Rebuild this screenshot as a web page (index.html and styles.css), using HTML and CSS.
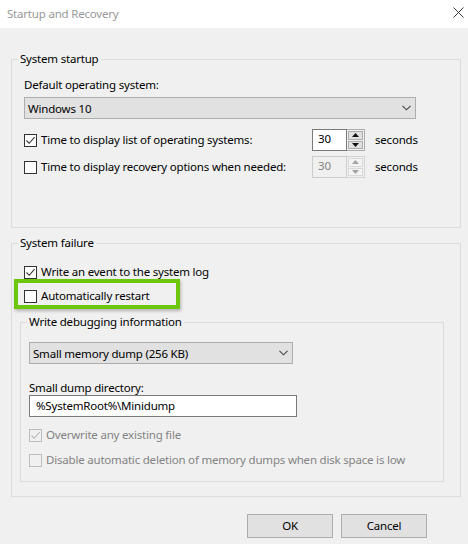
FILE: index.html
```html
<!DOCTYPE html>
<html lang="en">
<head>
<meta charset="utf-8">
<title>Startup and Recovery</title>
<link rel="stylesheet" href="styles.css">
</head>
<body>
<div class="window">
  <div class="titlebar">
    <span class="title">Startup and Recovery</span>
    <svg class="close" width="11" height="11" viewBox="0 0 11 11"><path d="M0.5 0.5 L10.5 10.5 M10.5 0.5 L0.5 10.5" stroke="#3c3c3c" stroke-width="1" fill="none"/></svg>
  </div>
  <div class="content">
    <fieldset class="group startup">
      <legend>System startup</legend>
      <div class="startup-inner">
        <div class="label">Default operating system:</div>
        <div class="select os-select">
          <span>Windows 10</span>
          <svg class="chev" width="9" height="6" viewBox="0 0 9 6"><path d="M0.5 0.8 L4.5 4.8 L8.5 0.8" stroke="#444" stroke-width="1.1" fill="none"/></svg>
        </div>
        <div class="timer-row first">
          <div class="check-label">
            <span class="cb"><svg width="11" height="11" viewBox="0 0 11 11"><path d="M1.5 5.5 L4.2 8.3 L9.6 2.2" stroke="#333" stroke-width="1.1" fill="none"/></svg></span>
            <span>Time to display list of operating systems:</span>
          </div>
          <div class="spin">
            <span class="spin-value">30</span>
            <span class="spin-btns">
              <span class="spin-btn"><svg width="7" height="4" viewBox="0 0 7 4"><polygon points="0,4 7,4 3.5,0" fill="#111"/></svg></span>
              <span class="spin-btn"><svg width="7" height="4" viewBox="0 0 7 4"><polygon points="0,0 7,0 3.5,4" fill="#111"/></svg></span>
            </span>
          </div>
          <span class="unit">seconds</span>
        </div>
        <div class="timer-row second">
          <div class="check-label">
            <span class="cb"></span>
            <span>Time to display recovery options when needed:</span>
          </div>
          <div class="spin disabled">
            <span class="spin-value">30</span>
            <span class="spin-btns">
              <span class="spin-btn"><svg width="7" height="4" viewBox="0 0 7 4"><polygon points="0,4 7,4 3.5,0" fill="#a3a3a3"/></svg></span>
              <span class="spin-btn"><svg width="7" height="4" viewBox="0 0 7 4"><polygon points="0,0 7,0 3.5,4" fill="#a3a3a3"/></svg></span>
            </span>
          </div>
          <span class="unit">seconds</span>
        </div>
      </div>
    </fieldset>

    <fieldset class="group failure">
      <legend>System failure</legend>
      <div class="failure-inner">
        <div class="check-label row-log">
          <span class="cb"><svg width="11" height="11" viewBox="0 0 11 11"><path d="M1.5 5.5 L4.2 8.3 L9.6 2.2" stroke="#333" stroke-width="1.1" fill="none"/></svg></span>
          <span>Write an event to the system log</span>
        </div>
        <div class="check-label row-restart">
          <span class="cb"></span>
          <span>Automatically restart</span>
          <span class="highlight"></span>
        </div>

        <fieldset class="group debug">
          <legend>Write debugging information</legend>
          <div class="debug-inner">
            <div class="select dump-select">
              <span>Small memory dump (256 KB)</span>
              <svg class="chev" width="9" height="6" viewBox="0 0 9 6"><path d="M0.5 0.8 L4.5 4.8 L8.5 0.8" stroke="#444" stroke-width="1.1" fill="none"/></svg>
            </div>
            <div class="label dir-label">Small dump directory:</div>
            <div class="textbox">%SystemRoot%\Minidump</div>
            <div class="check-label disabled row-overwrite">
              <span class="cb"><svg width="11" height="11" viewBox="0 0 11 11"><path d="M1.5 5.5 L4.2 8.3 L9.6 2.2" stroke="#b5b5b5" stroke-width="1.1" fill="none"/></svg></span>
              <span>Overwrite any existing file</span>
            </div>
            <div class="check-label disabled row-disable">
              <span class="cb"></span>
              <span>Disable automatic deletion of memory dumps when disk space is low</span>
            </div>
          </div>
        </fieldset>
      </div>
    </fieldset>

    <div class="buttons">
      <span class="btn">OK</span>
      <span class="btn">Cancel</span>
    </div>
  </div>
</div>
</body>
</html>
```

FILE: styles.css
```css
html, body {
  margin: 0;
  padding: 0;
}
body {
  width: 468px;
  height: 544px;
  overflow: hidden;
  background: #f0f0f0;
  font-family: "Noto Sans", "Open Sans", sans-serif;
  font-size: 11.5px;
  letter-spacing: -0.2px;
  color: #000;
}
.window {
  width: 468px;
  height: 544px;
  display: flex;
  flex-direction: column;
}
.titlebar {
  height: 28px;
  background: #fff;
  display: flex;
  align-items: center;
  justify-content: space-between;
  padding: 0 4px 0 7px;
  box-sizing: border-box;
}
.title {
  color: #999;
  line-height: 16px;
  margin-top: -1px;
}
.close {
  display: block;
  margin-top: -3px;
}
.content {
  flex: 1;
  padding: 23px 0 0 11px;
}
fieldset.group {
  margin: 0;
  padding: 0;
  border: 1px solid #dcdcdc;
  min-width: 0;
}
fieldset.group > legend {
  margin-left: 6px;
  padding: 0 2px;
  line-height: 16px;
}
fieldset.startup,
fieldset.failure {
  width: 450px;
  box-sizing: border-box;
}
.startup-inner {
  padding: 10px 0 49px 12px;
}
.label {
  line-height: 16px;
}
.select {
  height: 22px;
  box-sizing: border-box;
  border: 1px solid #adadad;
  background: #e1e1e1;
  display: flex;
  align-items: center;
  justify-content: space-between;
  padding: 0 4px 0 3px;
}
.os-select {
  margin-top: 4px;
  width: 392px;
}
.chev {
  display: block;
}
.timer-row {
  display: grid;
  grid-template-columns: 278px 53px auto;
  column-gap: 10px;
  align-items: center;
  height: 22px;
}
.timer-row.first {
  margin-top: 10px;
}
.timer-row.second {
  margin-top: 5px;
}
.check-label {
  display: flex;
  align-items: center;
  gap: 4px;
  line-height: 16px;
  white-space: nowrap;
}
.cb {
  width: 13px;
  height: 13px;
  box-sizing: border-box;
  border: 1px solid #333;
  background: #fff;
  flex: none;
  display: flex;
  align-items: center;
  justify-content: center;
}
.cb svg {
  display: block;
}
.spin {
  display: flex;
  height: 22px;
  width: 53px;
}
.spin-value {
  width: 35px;
  box-sizing: border-box;
  border: 1px solid #7a7a7a;
  background: #fff;
  padding-left: 5px;
  line-height: 18px;
}
.spin-btns {
  width: 18px;
  box-sizing: border-box;
  border: 1px solid #adadad;
  border-left: 0;
  display: flex;
  flex-direction: column;
  gap: 1px;
  padding: 1px;
  background: #f0f0f0;
}
.spin-btn {
  flex: 1;
  background: #e1e1e1;
  border: 1px solid #adadad;
  display: flex;
  align-items: center;
  justify-content: center;
}
.spin-btn svg {
  display: block;
}
.spin.disabled .spin-value {
  border-color: #cccccc;
  background: #f0f0f0;
  color: #838383;
}
.spin.disabled .spin-btns {
  border-color: #d5d5d5;
}
.spin.disabled .spin-btn {
  background: #f4f4f4;
  border-color: #d9d9d9;
}
.unit {
  line-height: 16px;
}
fieldset.failure {
  margin-top: 7px;
}
.failure-inner {
  padding: 13px 0 14px 0;
}
.failure-inner > .check-label {
  padding-left: 12px;
}
.row-restart {
  margin-top: 8px;
  position: relative;
}
.highlight {
  position: absolute;
  left: 2px;
  top: -9px;
  width: 166px;
  height: 30px;
  box-sizing: border-box;
  border: 4px solid #6cc70c;
  box-shadow: 1px 2px 3px rgba(0, 0, 0, 0.25);
}
fieldset.debug {
  margin: 10px 0 0 8px;
  width: 424px;
  box-sizing: border-box;
}
.debug-inner {
  padding: 12px 0 13px 8px;
}
.dump-select {
  width: 264px;
}
.dir-label {
  margin-top: 16px;
  line-height: 15px;
}
.textbox {
  width: 268px;
  height: 22px;
  box-sizing: border-box;
  border: 1px solid #7a7a7a;
  background: #fff;
  padding-left: 6px;
  line-height: 20px;
}
.row-overwrite {
  margin-top: 10px;
}
.row-disable {
  margin-top: 9px;
}
.check-label.disabled {
  color: #838383;
}
.check-label.disabled .cb {
  border-color: #bcbcbc;
  background: #f0f0f0;
}
.buttons {
  display: flex;
  justify-content: flex-end;
  gap: 8px;
  padding-right: 41px;
  margin-top: 17px;
}
.btn {
  width: 86px;
  height: 24px;
  box-sizing: border-box;
  border: 1px solid #adadad;
  background: #e1e1e1;
  display: flex;
  align-items: center;
  justify-content: center;
  line-height: 16px;
}
```
